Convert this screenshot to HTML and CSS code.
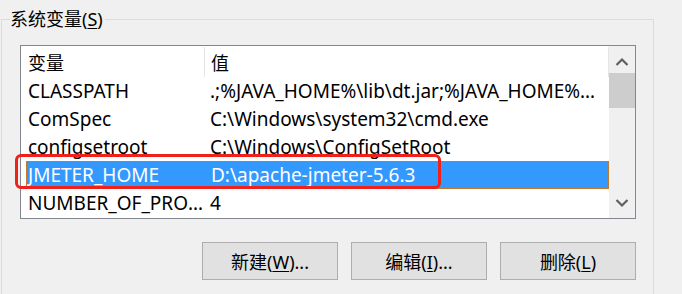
FILE: index.html
```html
<html lang="zh-CN">
<head>
  <meta charset="UTF-8">
  <title>系统变量</title>
  <link rel="stylesheet" href="styles.css">
</head>
<body>
  <fieldset class="group">
    <legend>系统变量(<u>S</u>)</legend>

    <div class="list-wrap">
      <div class="listbox">
        <div class="list">
          <div class="header">
            <div class="col name">变量</div>
            <div class="col value">值</div>
          </div>
          <div class="row">
            <div class="col name">CLASSPATH</div>
            <div class="col value">.;%JAVA_HOME%\lib\dt.jar;%JAVA_HOME%\lib\tools.jar;</div>
          </div>
          <div class="row">
            <div class="col name">ComSpec</div>
            <div class="col value">C:\Windows\system32\cmd.exe</div>
          </div>
          <div class="row">
            <div class="col name">configsetroot</div>
            <div class="col value">C:\Windows\ConfigSetRoot</div>
          </div>
          <div class="row selected">
            <div class="col name">JMETER_HOME</div>
            <div class="col value">D:\apache-jmeter-5.6.3</div>
          </div>
          <div class="row">
            <div class="col name">NUMBER_OF_PROCESSORS</div>
            <div class="col value">4</div>
          </div>
        </div>

        <!-- vertical scrollbar -->
        <div class="scrollbar">
          <svg class="arrow" width="14" height="10" viewBox="0 0 14 10">
            <path d="M1.5 8 L7 2.5 L12.5 8" fill="none" stroke="#606060" stroke-width="2.2"/>
          </svg>
          <div class="thumb"></div>
          <div class="track"></div>
          <svg class="arrow" width="14" height="10" viewBox="0 0 14 10">
            <path d="M1.5 2 L7 7.5 L12.5 2" fill="none" stroke="#606060" stroke-width="2.2"/>
          </svg>
        </div>
      </div>

      <!-- red annotation around the selected row -->
      <div class="mark"></div>
    </div>

    <div class="buttons">
      <button>新建(<u>W</u>)...</button>
      <button>编辑(<u>I</u>)...</button>
      <button>删除(<u>L</u>)</button>
    </div>
  </fieldset>
</body>
</html>
```

FILE: styles.css
```css
body {
  margin: 0;
  background-color: #f0f0f0;
  font-family: "Noto Sans", "Noto Sans CJK SC", sans-serif;
  font-size: 18px;
  color: #000;
  overflow: hidden;
}

.group {
  margin: 7px 0 0 1px;
  width: 643px;
  padding: 0 0 60px 8px;
  border: 1px solid #dcdcdc;
  box-sizing: content-box;
}

.group legend {
  padding: 0 2px 0 0;
  line-height: 24px;
}

u {
  text-decoration-thickness: 1px;
  text-underline-offset: 2px;
}

.list-wrap {
  position: relative;
  margin: 14px 0 0 10px;
  width: 616px;
}

.listbox {
  display: flex;
  height: 172px;
  border: 1px solid #828790;
  background-color: #fff;
}

.list {
  width: 588px;
}

.header {
  display: flex;
  height: 31px;
  align-items: center;
}

.header .col {
  height: 30px;
  line-height: 32px;
  border-right: 1px solid #e5e5e5;
}

.header .name {
  width: 184px;
  padding-left: 7px;
}

.header .value {
  flex: 1;
  padding-left: 6px;
}

.row {
  display: flex;
  height: 28px;
  line-height: 29px;
  margin-left: 5px;
  font-size: 19px;
  box-sizing: border-box;
}

.col {
  white-space: nowrap;
  overflow: hidden;
  text-overflow: ellipsis;
  box-sizing: border-box;
}

.row .name {
  width: 178px;
  padding: 0 0 0 2px;
}

.row .value {
  flex: 1;
  padding: 0 12px 0 6px;
}

.row.selected {
  background-color: #3399ff;
  color: #fff;
  border: 1px dotted #c47a2c;
  line-height: 27px;
}

.row.selected .name {
  padding-left: 1px;
}

.scrollbar {
  width: 26px;
  display: flex;
  flex-direction: column;
  align-items: center;
  background-color: #f0f0f0;
}

.scrollbar .arrow {
  margin: 11px 0 6px;
}

.scrollbar .thumb {
  width: 100%;
  height: 35px;
  background-color: #cdcdcd;
}

.scrollbar .track {
  flex: 1;
}

.scrollbar .arrow:last-child {
  margin: 0 0 10px;
}

.mark {
  position: absolute;
  left: -5px;
  top: 109px;
  width: 420px;
  height: 29px;
  border: 3px solid #f0201a;
  border-radius: 6px;
}

.buttons {
  display: flex;
  justify-content: flex-end;
  gap: 13px;
  width: 626px;
  margin-top: 23px;
}

.buttons button {
  width: 136px;
  height: 38px;
  background-color: #e1e1e1;
  border: 1px solid #adadad;
  border-radius: 0;
  font-family: inherit;
  font-size: 18px;
  color: #000;
  padding: 0;
}
```
